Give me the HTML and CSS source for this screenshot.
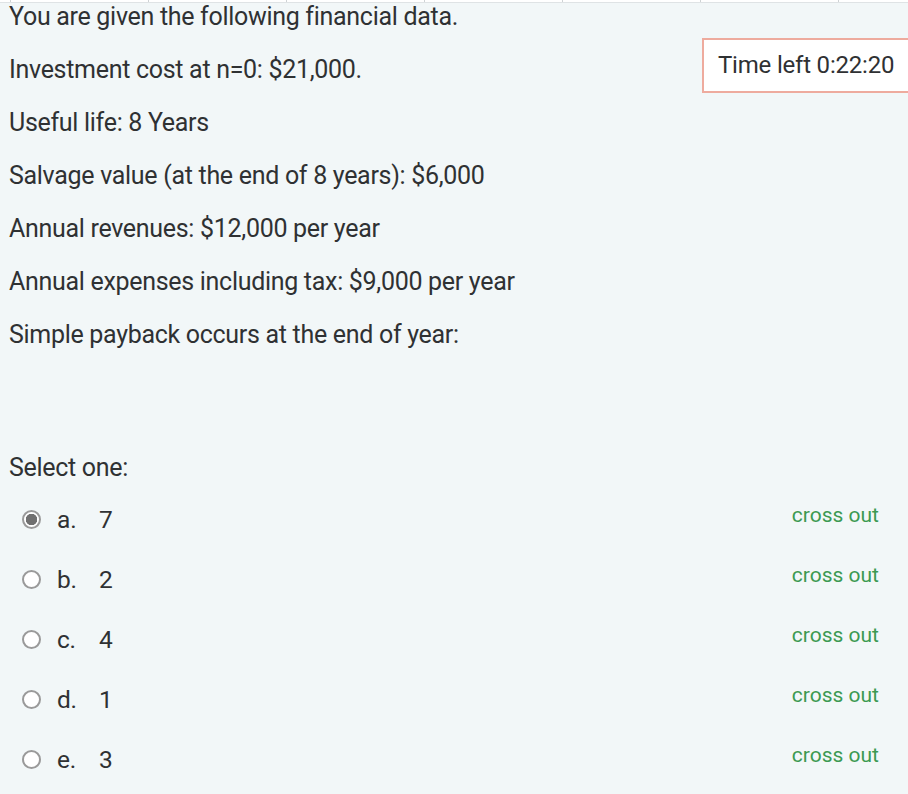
FILE: index.html
```html
<!DOCTYPE html>
<html>
<head>
<meta charset="utf-8">
<link rel="stylesheet" href="styles.css">
</head>
<body>
<div class="strip">
  <div class="cell"></div><div class="cell"></div><div class="cell"></div><div class="cell"></div><div class="cell"></div><div class="cell"></div><div class="cell"></div>
</div>
<div class="timer">Time left 0:22:20</div>
<div class="question">
  <p class="line">You are given the following financial data.</p>
  <p class="line">Investment cost at n=0: $21,000.</p>
  <p class="line">Useful life: 8 Years</p>
  <p class="line">Salvage value (at the end of 8 years): $6,000</p>
  <p class="line">Annual revenues: $12,000 per year</p>
  <p class="line">Annual expenses including tax: $9,000 per year</p>
  <p class="line">Simple payback occurs at the end of year:</p>
  <p class="prompt">Select one:</p>
  <div class="answers">
    <div class="option">
      <span class="radio checked"></span><span class="letter">a.</span><span class="value">7</span>
      <a class="cross">cross out</a>
    </div>
    <div class="option">
      <span class="radio"></span><span class="letter">b.</span><span class="value">2</span>
      <a class="cross">cross out</a>
    </div>
    <div class="option">
      <span class="radio"></span><span class="letter">c.</span><span class="value">4</span>
      <a class="cross">cross out</a>
    </div>
    <div class="option">
      <span class="radio"></span><span class="letter">d.</span><span class="value">1</span>
      <a class="cross">cross out</a>
    </div>
    <div class="option">
      <span class="radio"></span><span class="letter">e.</span><span class="value">3</span>
      <a class="cross">cross out</a>
    </div>
  </div>
</div>
</body>
</html>
```
FILE: styles.css
```css
html, body {
  margin: 0;
  padding: 0;
  background: #f2f7f8;
  font-family: Roboto, "Liberation Sans", sans-serif;
  color: #2f3133;
  overflow: hidden;
}
.strip {
  display: flex;
  height: 2px;
  background: #ffffff;
  border-bottom: 1px solid #dfe3e5;
  padding-left: 10px;
}
.cell {
  width: 137px;
  flex: none;
  border-left: 1px solid #cfd3d5;
}
.timer {
  position: absolute;
  left: 702px;
  top: 38px;
  width: 230px;
  height: 55px;
  box-sizing: border-box;
  border: 2px solid #eeab9e;
  background: #ffffff;
  font-size: 24px;
  line-height: 51px;
  padding-left: 14px;
  letter-spacing: -0.2px;
}
.question {
  padding-left: 9px;
}
.line {
  margin: 0 0 25px 0;
  font-size: 25px;
  line-height: 28px;
  letter-spacing: -0.3px;
}
.prompt {
  margin: 105px 0 0 0;
  font-size: 25px;
  line-height: 28px;
  letter-spacing: -0.3px;
}
.answers {
  margin-top: 7px;
}
.option {
  display: flex;
  align-items: center;
  height: 60px;
  font-size: 24.5px;
  letter-spacing: -0.2px;
}
.radio {
  width: 19px;
  height: 19px;
  border: 2px solid #9a9a9a;
  border-radius: 50%;
  background: #ffffff;
  margin-left: 13px;
  box-sizing: border-box;
  flex: none;
}
.radio.checked {
  background: radial-gradient(circle, #707070 0 5.5px, #ffffff 6px);
}
.letter {
  margin-left: 16px;
  width: 42px;
}
.cross {
  margin-left: auto;
  margin-right: 29px;
  margin-bottom: 8px;
  color: #3c9a52;
  font-size: 21px;
  letter-spacing: 0px;
}
```
